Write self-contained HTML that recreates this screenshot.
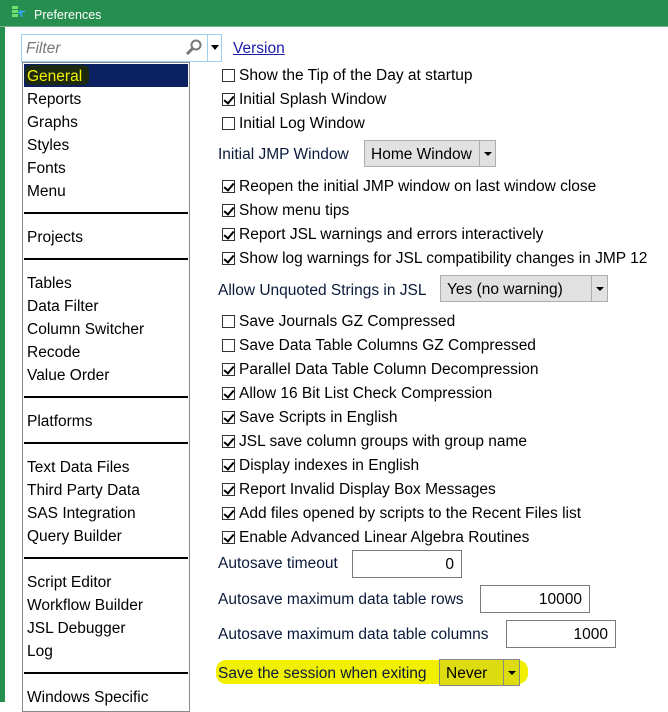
<!DOCTYPE html>
<html><head><meta charset="utf-8"><style>
*{margin:0;padding:0;box-sizing:border-box}
body{width:668px;height:702px;overflow:hidden;background:#fff;font-family:"Liberation Sans",sans-serif;font-size:15.5px;color:#000;position:relative}
.a{position:absolute;white-space:nowrap;line-height:18px;margin-top:2px}
.title{position:absolute;left:0;top:0;width:668px;height:27px;background:#268f50;border-bottom:1px solid #7fb08f}
.lb{position:absolute;left:0;top:27px;width:5px;height:675px;background:#268f50}
.li{position:absolute;left:27px;line-height:18px;margin-top:2px;white-space:nowrap}
.sep{position:absolute;left:24px;width:164px;height:2px;background:#000}
.cb{position:absolute;left:222px;width:13px;height:13px;border:1px solid #333;background:#fff;margin-top:1px}
.cb.c::after{content:"";position:absolute;left:3px;top:0px;width:4px;height:8px;border:solid #000;border-width:0 2px 2px 0;transform:rotate(40deg)}
.dd{position:absolute;background:#e1e1e1;border:1px solid #adadad;height:27px;line-height:27px;padding-left:6px}
.dd .ar{position:absolute;right:0;top:0;width:16px;height:25px;border-left:1px solid #adadad}
.dd .ar::after{content:"";position:absolute;left:4px;top:11px;border:4px solid transparent;border-top:4px solid #000;border-bottom:0}
.in{position:absolute;border:1px solid #7a7a7a;height:28px;line-height:27px;text-align:right;padding-right:7px}
</style></head><body>
<div class="title">
<svg style="position:absolute;left:12px;top:6px" width="14" height="14" viewBox="0 0 14 14"><rect x="0" y="0" width="6" height="3" fill="#6de06d"/><rect x="0" y="4" width="6" height="3" fill="#6de06d"/><rect x="0" y="8" width="6" height="3" fill="#6de06d"/><path d="M6 7 L13 5 M8 4 L10 11" stroke="#2fa8ff" stroke-width="1.5"/></svg>
<span class="a" style="left:34px;top:4px;font-size:12.5px;color:#fff">Preferences</span>
</div>
<div class="lb"></div>

<div style="position:absolute;left:21px;top:34px;width:201px;height:28px;border:1px solid #9fd0ee"></div>
<div style="position:absolute;left:207px;top:35px;width:1px;height:26px;background:#9fd0ee"></div>
<span class="a" style="left:26px;top:38px;font-style:italic;color:#777">Filter</span>
<svg style="position:absolute;left:185px;top:39px" width="18" height="16" viewBox="0 0 18 16"><circle cx="11" cy="6" r="4.5" fill="none" stroke="#777" stroke-width="2"/><path d="M8 9 L2 15" stroke="#777" stroke-width="3"/></svg>
<div style="position:absolute;left:211px;top:45px;border:4px solid transparent;border-top:5px solid #000;border-bottom:0"></div>
<span class="a" style="left:233px;top:38px;color:#1a1aa6;text-decoration:underline">Version</span>

<div style="position:absolute;left:22px;top:62px;width:168px;height:650px;border:1px solid #8a8a8a"></div>
<div style="position:absolute;left:24px;top:64px;width:164px;height:23px;background:#0b2060"></div>
<div style="position:absolute;left:25px;top:65px;width:64px;height:20px;background:#1d2a10;border-radius:6px"></div>
<div class="li" style="top:66px;color:#f2f200">General</div>
<div class="li" style="top:89px">Reports</div>
<div class="li" style="top:112px">Graphs</div>
<div class="li" style="top:135px">Styles</div>
<div class="li" style="top:158px">Fonts</div>
<div class="li" style="top:181px">Menu</div>
<div class="sep" style="top:212px"></div>
<div class="li" style="top:227px">Projects</div>
<div class="sep" style="top:258px"></div>
<div class="li" style="top:273px">Tables</div>
<div class="li" style="top:296px">Data Filter</div>
<div class="li" style="top:319px">Column Switcher</div>
<div class="li" style="top:342px">Recode</div>
<div class="li" style="top:365px">Value Order</div>
<div class="sep" style="top:396px"></div>
<div class="li" style="top:411px">Platforms</div>
<div class="sep" style="top:442px"></div>
<div class="li" style="top:457px">Text Data Files</div>
<div class="li" style="top:480px">Third Party Data</div>
<div class="li" style="top:503px">SAS Integration</div>
<div class="li" style="top:526px">Query Builder</div>
<div class="sep" style="top:557px"></div>
<div class="li" style="top:572px">Script Editor</div>
<div class="li" style="top:595px">Workflow Builder</div>
<div class="li" style="top:618px">JSL Debugger</div>
<div class="li" style="top:641px">Log</div>
<div class="sep" style="top:672px"></div>
<div class="li" style="top:687px">Windows Specific</div>

<div class="cb" style="top:68px"></div><span class="a" style="left:239px;top:65px">Show the Tip of the Day at startup</span>
<div class="cb c" style="top:92px"></div><span class="a" style="left:239px;top:89px">Initial Splash Window</span>
<div class="cb" style="top:116px"></div><span class="a" style="left:239px;top:113px">Initial Log Window</span>

<span class="a" style="left:218px;top:144px;color:#0a1a3a">Initial JMP Window</span>
<div class="dd" style="left:364px;top:140px;width:132px">Home Window<div class="ar"></div></div>

<div class="cb c" style="top:179px"></div><span class="a" style="left:239px;top:176px">Reopen the initial JMP window on last window close</span>
<div class="cb c" style="top:203px"></div><span class="a" style="left:239px;top:200px">Show menu tips</span>
<div class="cb c" style="top:227px"></div><span class="a" style="left:239px;top:224px">Report JSL warnings and errors interactively</span>
<div class="cb c" style="top:251px"></div><span class="a" style="left:239px;top:248px">Show log warnings for JSL compatibility changes in JMP 12</span>

<span class="a" style="left:218px;top:280px;color:#0a1a3a">Allow Unquoted Strings in JSL</span>
<div class="dd" style="left:440px;top:275px;width:168px">Yes (no warning)<div class="ar"></div></div>

<div class="cb" style="top:314px"></div><span class="a" style="left:239px;top:311px">Save Journals GZ Compressed</span>
<div class="cb" style="top:338px"></div><span class="a" style="left:239px;top:335px">Save Data Table Columns GZ Compressed</span>
<div class="cb c" style="top:362px"></div><span class="a" style="left:239px;top:359px">Parallel Data Table Column Decompression</span>
<div class="cb c" style="top:386px"></div><span class="a" style="left:239px;top:383px">Allow 16 Bit List Check Compression</span>
<div class="cb c" style="top:410px"></div><span class="a" style="left:239px;top:407px">Save Scripts in English</span>
<div class="cb c" style="top:434px"></div><span class="a" style="left:239px;top:431px">JSL save column groups with group name</span>
<div class="cb c" style="top:458px"></div><span class="a" style="left:239px;top:455px">Display indexes in English</span>
<div class="cb c" style="top:482px"></div><span class="a" style="left:239px;top:479px">Report Invalid Display Box Messages</span>
<div class="cb c" style="top:506px"></div><span class="a" style="left:239px;top:503px">Add files opened by scripts to the Recent Files list</span>
<div class="cb c" style="top:530px"></div><span class="a" style="left:239px;top:527px">Enable Advanced Linear Algebra Routines</span>

<span class="a" style="left:218px;top:553px;color:#0a1a3a">Autosave timeout</span>
<div class="in" style="left:352px;top:550px;width:110px">0</div>
<span class="a" style="left:218px;top:589px;color:#0a1a3a">Autosave maximum data table rows</span>
<div class="in" style="left:480px;top:585px;width:110px">10000</div>
<span class="a" style="left:218px;top:624px;color:#0a1a3a">Autosave maximum data table columns</span>
<div class="in" style="left:506px;top:620px;width:110px">1000</div>

<div style="position:absolute;left:216px;top:660px;width:312px;height:24px;background:#f0f000;border-radius:10px"></div>
<span class="a" style="left:218px;top:663px;color:#0a1a3a">Save the session when exiting</span>
<div class="dd" style="left:439px;top:659px;width:81px;background:#dcdc10;border-color:#888">Never<div class="ar" style="background:#dcdc10;border-color:#888"></div></div>
</body></html>
